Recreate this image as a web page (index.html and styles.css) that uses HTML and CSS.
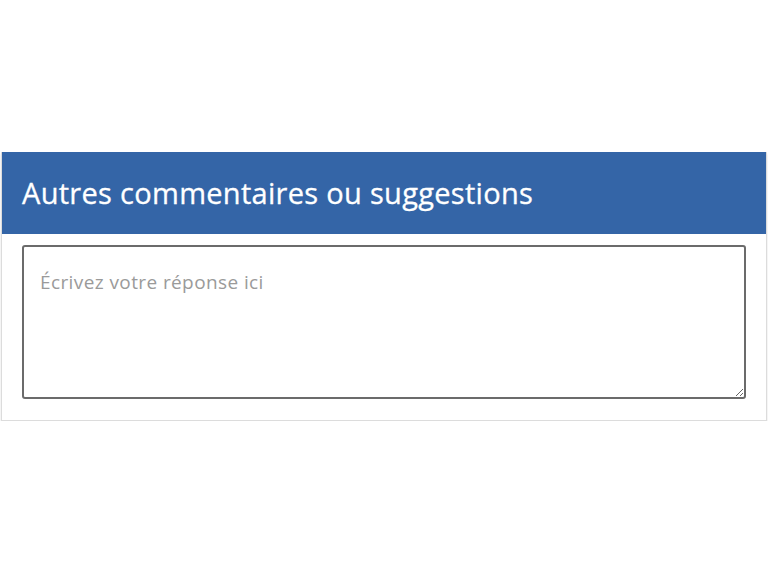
FILE: index.html
```html
<!DOCTYPE html>
<html lang="fr">
<head>
<meta charset="utf-8">
<link rel="stylesheet" href="styles.css">
</head>
<body>
<section class="card">
  <header class="card-header">
    <h2 class="card-title">Autres commentaires ou suggestions</h2>
  </header>
  <div class="card-body">
    <textarea class="answer" placeholder="Écrivez votre réponse ici"></textarea>
  </div>
</section>
</body>
</html>
```
FILE: styles.css
```css
html, body {
  margin: 0;
  padding: 0;
  background: #ffffff;
}
body {
  padding-top: 152px;
  font-family: "Open Sans", Lato, sans-serif;
}
.card {
  margin: 0 1px 0 1px;
  border: 1px solid #dcdcdc;
  border-top: none;
  box-shadow: 0 2px 2px rgba(0,0,0,0.12);
  background: #fff;
}
.card-header {
  background: #3465a7;
  height: 82px;
  display: flex;
  align-items: center;
  padding: 0 20px;
}
.card-title {
  margin: 0 0 2px 0;
  color: #ffffff;
  font-weight: 500;
  font-size: 29px;
  letter-spacing: 0.3px;
  -webkit-text-stroke: 0.3px #ffffff;
}
.card-body {
  padding: 11px 20px 21px 20px;
}
.answer {
  display: block;
  box-sizing: border-box;
  width: 100%;
  height: 154px;
  border: 2px solid #6b6b6b;
  border-radius: 3px;
  padding: 22px 16px 20px 16px;
  font-family: "Open Sans", Lato, sans-serif;
  font-size: 19px;
  letter-spacing: 0.4px;
  color: #333;
  resize: vertical;
}
.answer::placeholder {
  color: #9a9a9a;
}
```
